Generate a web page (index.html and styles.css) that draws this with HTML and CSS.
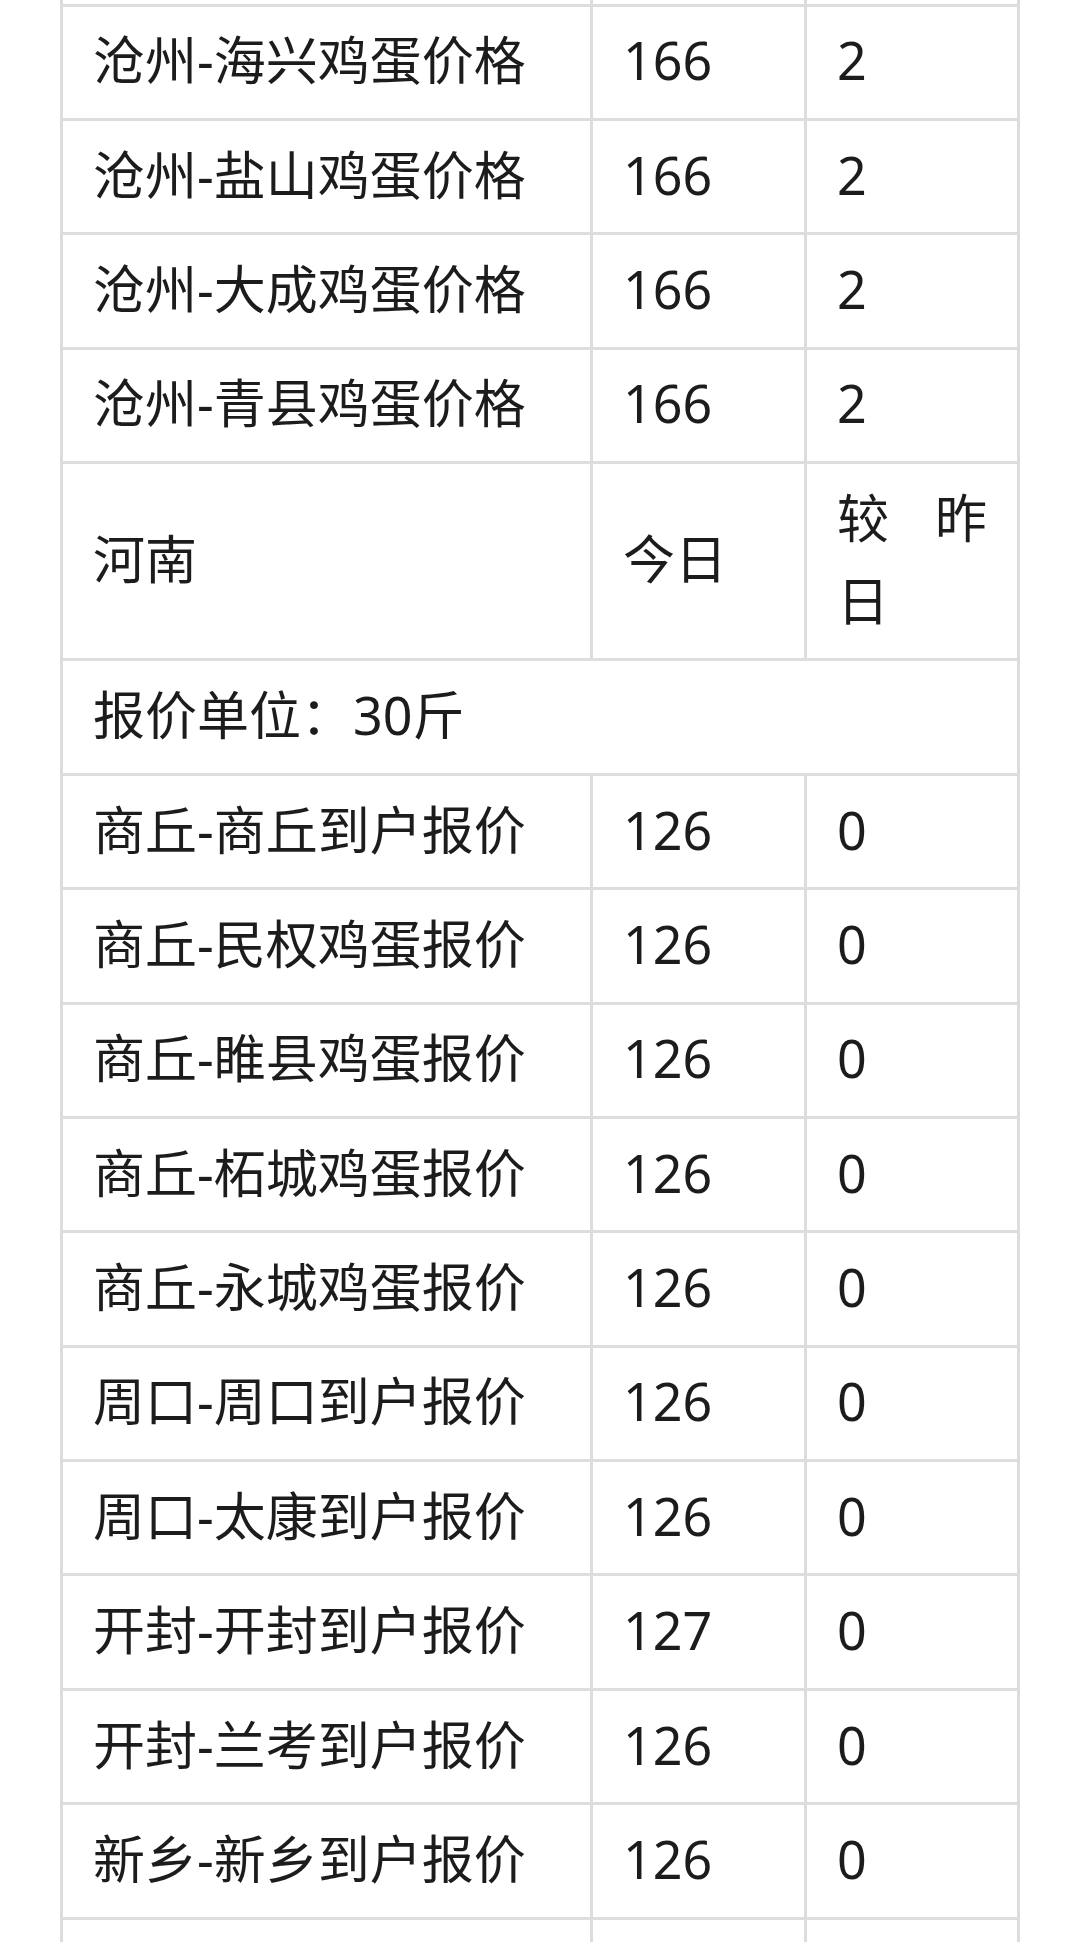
FILE: index.html
```html
<!DOCTYPE html>
<html lang="zh-CN">
<head>
<meta charset="utf-8">
<title>鸡蛋价格</title>
<link rel="stylesheet" href="styles.css">
</head>
<body>
<div class="page">
  <div class="sheet">
    <div class="cell">&nbsp;</div><div class="cell">&nbsp;</div><div class="cell">&nbsp;</div>

    <div class="cell">沧州-海兴鸡蛋价格</div><div class="cell">166</div><div class="cell">2</div>
    <div class="cell">沧州-盐山鸡蛋价格</div><div class="cell">166</div><div class="cell">2</div>
    <div class="cell">沧州-大成鸡蛋价格</div><div class="cell">166</div><div class="cell">2</div>
    <div class="cell">沧州-青县鸡蛋价格</div><div class="cell">166</div><div class="cell">2</div>

    <div class="cell mid">河南</div><div class="cell mid">今日</div><div class="cell">较昨日</div>
    <div class="cell span">报价单位：30斤</div>

    <div class="cell">商丘-商丘到户报价</div><div class="cell">126</div><div class="cell">0</div>
    <div class="cell">商丘-民权鸡蛋报价</div><div class="cell">126</div><div class="cell">0</div>
    <div class="cell">商丘-睢县鸡蛋报价</div><div class="cell">126</div><div class="cell">0</div>
    <div class="cell">商丘-柘城鸡蛋报价</div><div class="cell">126</div><div class="cell">0</div>
    <div class="cell">商丘-永城鸡蛋报价</div><div class="cell">126</div><div class="cell">0</div>
    <div class="cell">周口-周口到户报价</div><div class="cell">126</div><div class="cell">0</div>
    <div class="cell">周口-太康到户报价</div><div class="cell">126</div><div class="cell">0</div>
    <div class="cell">开封-开封到户报价</div><div class="cell">127</div><div class="cell">0</div>
    <div class="cell">开封-兰考到户报价</div><div class="cell">126</div><div class="cell">0</div>
    <div class="cell">新乡-新乡到户报价</div><div class="cell">126</div><div class="cell">0</div>

    <div class="cell">&nbsp;</div><div class="cell">&nbsp;</div><div class="cell">&nbsp;</div>
  </div>
</div>
</body>
</html>
```
FILE: styles.css
```css
html, body {
  margin: 0;
  padding: 0;
  background: #ffffff;
}

.page {
  height: 1942px;
  overflow: hidden;
}

.sheet {
  display: grid;
  grid-template-columns: 527px 211px 210px;
  gap: 3px;
  padding: 3px;
  background: #dddddd;
  width: max-content;
  margin: -110.8px auto 0;
}

.cell {
  background: #ffffff;
  padding: 11.7px 30px 16.7px;
  font-family: "Noto Sans", "Noto Sans CJK SC", sans-serif;
  font-size: 52px;
  line-height: 83px;
  color: #1c1c1c;
  text-align: justify;
}

.mid {
  display: flex;
  align-items: center;
}

.span {
  grid-column: 1 / -1;
}
```
